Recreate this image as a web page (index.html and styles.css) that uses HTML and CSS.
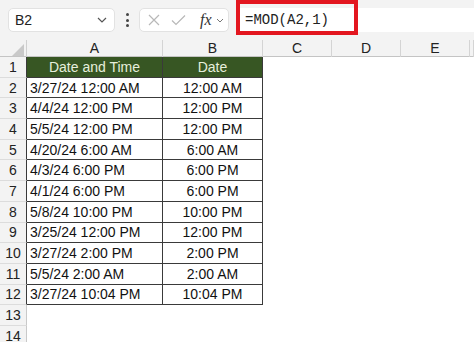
FILE: index.html
```html
<!DOCTYPE html>
<html>
<head>
<meta charset="utf-8">
<link rel="stylesheet" href="styles.css">
</head>
<body>
<div class="app">
  <div class="toolbar">
    <div class="namebox">
      <span class="ref">B2</span>
      <svg class="chev" width="10" height="6" viewBox="0 0 10 6"><path d="M1 1 L5 5 L9 1" fill="none" stroke="#555" stroke-width="1.2"/></svg>
    </div>
    <div class="kebab"><i></i><i></i><i></i></div>
    <div class="fxbox">
      <svg class="ico" width="12" height="12" viewBox="0 0 12 12"><path d="M1 1 L11 11 M11 1 L1 11" stroke="#b8b8b8" stroke-width="1.2"/></svg>
      <svg class="ico" width="15" height="12" viewBox="0 0 15 12"><path d="M1 6.5 L5 10.5 L14 1.5" fill="none" stroke="#b8b8b8" stroke-width="1.2"/></svg>
      <span class="fx">fx</span>
      <svg class="chev small" width="8" height="5" viewBox="0 0 8 5"><path d="M1 1 L4 4 L7 1" fill="none" stroke="#777" stroke-width="1"/></svg>
    </div>
    <div class="formula">
      <span class="ftext">=MOD(A2,1)</span>
      <div class="highlight"></div>
    </div>
  </div>

  <div class="sheet">
    <div class="hrow">
      <div class="corner"><span class="tri"></span></div>
      <div class="ch">A</div>
      <div class="ch">B</div>
      <div class="ch">C</div>
      <div class="ch">D</div>
      <div class="ch">E</div>
      <div class="ch last"></div>
    </div>

    <div class="row t">
      <div class="rh">1</div>
      <div class="c a head">Date and Time</div>
      <div class="c b head">Date</div>
      <div class="blank"></div>
    </div>
    <div class="row t"><div class="rh">2</div><div class="c a">3/27/24 12:00 AM</div><div class="c b">12:00 AM</div><div class="blank"></div></div>
    <div class="row t"><div class="rh">3</div><div class="c a">4/4/24 12:00 PM</div><div class="c b">12:00 PM</div><div class="blank"></div></div>
    <div class="row t"><div class="rh">4</div><div class="c a">5/5/24 12:00 PM</div><div class="c b">12:00 PM</div><div class="blank"></div></div>
    <div class="row t"><div class="rh">5</div><div class="c a">4/20/24 6:00 AM</div><div class="c b">6:00 AM</div><div class="blank"></div></div>
    <div class="row t"><div class="rh">6</div><div class="c a">4/3/24 6:00 PM</div><div class="c b">6:00 PM</div><div class="blank"></div></div>
    <div class="row t"><div class="rh">7</div><div class="c a">4/1/24 6:00 PM</div><div class="c b">6:00 PM</div><div class="blank"></div></div>
    <div class="row t"><div class="rh">8</div><div class="c a">5/8/24 10:00 PM</div><div class="c b">10:00 PM</div><div class="blank"></div></div>
    <div class="row t"><div class="rh">9</div><div class="c a">3/25/24 12:00 PM</div><div class="c b">12:00 PM</div><div class="blank"></div></div>
    <div class="row t"><div class="rh">10</div><div class="c a">3/27/24 2:00 PM</div><div class="c b">2:00 PM</div><div class="blank"></div></div>
    <div class="row t"><div class="rh">11</div><div class="c a">5/5/24 2:00 AM</div><div class="c b">2:00 AM</div><div class="blank"></div></div>
    <div class="row t"><div class="rh">12</div><div class="c a">3/27/24 10:04 PM</div><div class="c b">10:04 PM</div><div class="blank"></div></div>
    <div class="row"><div class="rh">13</div><div class="blank wide"></div></div>
    <div class="row"><div class="rh">14</div><div class="blank wide"></div></div>
  </div>
</div>
</body>
</html>
```

FILE: styles.css
```css
* { box-sizing: border-box; }
html, body { margin: 0; padding: 0; background: #fff; }
body {
  width: 474px;
  height: 342px;
  overflow: hidden;
  font-family: "Liberation Sans", Arial, sans-serif;
  color: #222;
}

.toolbar {
  height: 40px;
  background: #f3f3f3;
  display: flex;
  align-items: flex-start;
  padding: 8px 0 0 8px;
}

.namebox {
  width: 107px;
  height: 24px;
  background: #fff;
  border: 1px solid #e2e2e2;
  border-radius: 5px;
  display: flex;
  align-items: center;
  justify-content: space-between;
  padding: 0 7px 0 6px;
}
.ref { font-size: 14px; color: #222; }

.kebab {
  width: 24px;
  height: 24px;
  display: flex;
  flex-direction: column;
  align-items: center;
  justify-content: center;
  gap: 2.5px;
}
.kebab i {
  display: block;
  width: 3px;
  height: 3px;
  border-radius: 50%;
  background: #444;
}

.fxbox {
  width: 90px;
  height: 24px;
  background: #fff;
  border: 1px solid #e2e2e2;
  border-radius: 5px;
  display: flex;
  align-items: center;
  padding: 0 4px 0 8px;
  gap: 10px;
}
.fxbox .ico:first-child { margin-right: 1px; }
.fx {
  font-family: "Liberation Serif", "Times New Roman", serif;
  font-style: italic;
  font-size: 16px;
  color: #333;
  margin-left: 4px;
  margin-right: -6px;
}

.formula {
  position: relative;
  flex: 1;
  height: 24px;
  margin-left: 7px;
  background: #fff;
  display: flex;
  align-items: center;
  padding-left: 9px;
}
.ftext {
  font-family: "Liberation Mono", "Courier New", monospace;
  font-size: 14px;
  color: #222;
}
.highlight {
  position: absolute;
  left: 0;
  top: -8px;
  width: 122px;
  height: 35px;
  border: 4px solid #e3161f;
  pointer-events: none;
}

/* sheet */
.hrow {
  display: grid;
  grid-template-columns: 27px 136px 100px 69px 69px 69px 1fr;
  height: 17px;
  background: #f3f3f3;
  border-bottom: 1px solid #c4c4c4;
}
.corner {
  position: relative;
  border-right: 1px solid #d0d0d0;
}
.tri {
  position: absolute;
  right: 2px;
  bottom: 1px;
  width: 0;
  height: 0;
  border-left: 12px solid transparent;
  border-bottom: 12px solid #c9c9c9;
}
.ch {
  border-right: 1px solid #d4d4d4;
  font-size: 14px;
  line-height: 17px;
  text-align: center;
  color: #222;
}

.row {
  display: grid;
  grid-template-columns: 27px 136px 100px 1fr;
  height: 20.7px;
}
.rh {
  background: #f3f3f3;
  border-right: 1px solid #c9c9c9;
  border-bottom: 1px solid #dcdcdc;
  font-size: 14px;
  display: flex;
  align-items: center;
  justify-content: center;
  color: #222;
}
.row.t .rh { border-right-color: #3a3a3a; }
.wide { grid-column: 2 / -1; }

.c {
  border-right: 1px solid #3a3a3a;
  border-bottom: 1px solid #3a3a3a;
  font-size: 14px;
  display: flex;
  align-items: center;
  white-space: nowrap;
  color: #111;
}
.c.a { padding-left: 3px; }
.c.b { justify-content: center; }
.c.head {
  background: #375623;
  color: #e6efdc;
  justify-content: center;
  padding-left: 0;
}
```
